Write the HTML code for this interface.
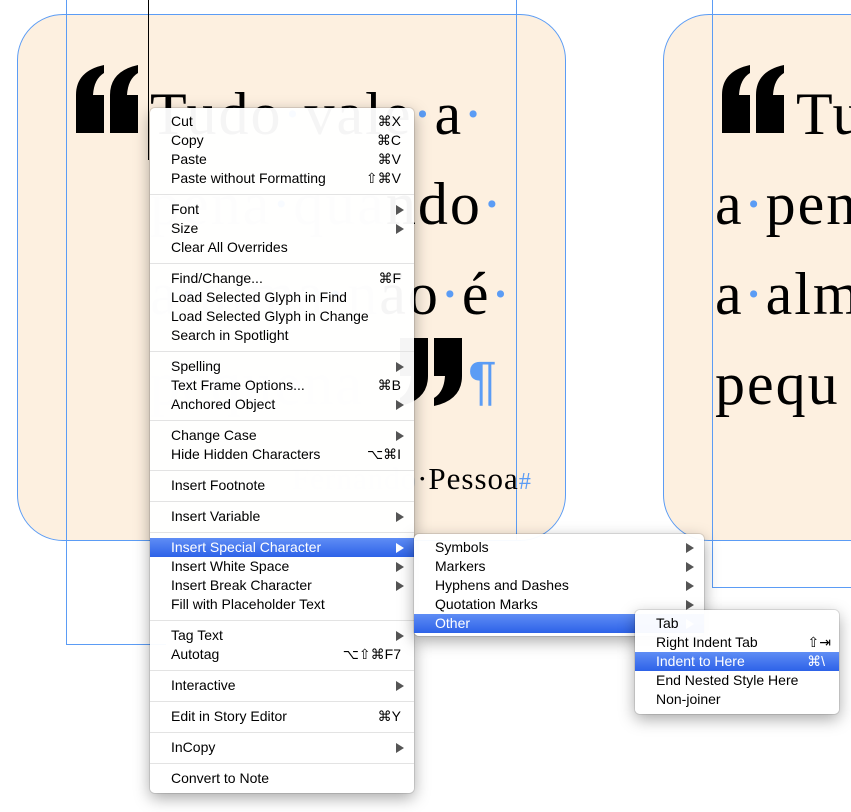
<!DOCTYPE html>
<html><head><meta charset="utf-8"><style>
*{margin:0;padding:0;box-sizing:border-box}
body{width:851px;height:812px;background:#fff;position:relative;overflow:hidden;font-family:"Liberation Sans",sans-serif}
.card{position:absolute;background:#fdf0e0;border:1px solid #5b9cf5;border-radius:46px}
.vl{position:absolute;width:1px;background:#5b9cf5}
.hl{position:absolute;height:1px;background:#5b9cf5}
.t{position:absolute;font-family:"Liberation Serif",serif;font-size:60px;color:#000;white-space:nowrap;line-height:1;letter-spacing:2px}
.dot{color:#5b9cf5}
.menu{position:absolute;background:rgba(255,255,255,0.96);border-radius:5px;box-shadow:0 5px 16px rgba(0,0,0,0.35),0 0 0 1px rgba(0,0,0,0.1)}
.r{position:absolute;left:0;right:0;height:19px;font-size:14px;line-height:19px;color:#000;padding-left:21px;white-space:nowrap}
.r .k{position:absolute;right:13px;top:0}
.r .a{position:absolute;right:10px;top:5px;width:0;height:0;border-left:8px solid #555;border-top:5px solid transparent;border-bottom:5px solid transparent}
.r.h{background:linear-gradient(#5f8df5,#2d62e8);color:#fff}
.r.h .a{border-left-color:#fff}
.s{position:absolute;left:0;right:0;height:1px;background:#e3e3e3}
svg{position:absolute}
</style></head><body>
<div class="card" style="left:17px;top:14px;width:549px;height:527px"></div>
<div class="card" style="left:663px;top:14px;width:240px;height:527px"></div>
<div class="vl" style="left:66px;top:0;height:645px"></div>
<div class="hl" style="left:66px;top:644px;width:100px"></div>
<div class="vl" style="left:516px;top:0;height:541px"></div>
<div class="vl" style="left:712px;top:0;height:588px"></div>
<div class="hl" style="left:712px;top:587px;width:139px"></div>
<div class="vl" style="left:148px;top:0;height:160px;background:#000"></div>

<svg style="left:76px;top:65px" width="64" height="68" viewBox="0 0 64 68"><path d="M0 68V30Q0 6 28 0V8Q18 14 17 30H28V68Z M34 68V30Q34 6 62 0V8Q52 14 51 30H62V68Z" fill="#000"/></svg>
<svg style="left:722px;top:65px" width="64" height="68" viewBox="0 0 64 68"><path d="M0 68V30Q0 6 28 0V8Q18 14 17 30H28V68Z M34 68V30Q34 6 62 0V8Q52 14 51 30H62V68Z" fill="#000"/></svg>

<div class="t" style="left:150px;top:84px">Tudo<span class="dot">·</span>vale<span class="dot">·</span>a<span class="dot">·</span></div>
<div class="t" style="left:150px;top:174px;color:#ccc">pena<span class="dot">·</span>qua<span style="color:#000">ndo</span><span class="dot">·</span></div>
<div class="t" style="left:150px;top:264px;color:#ccc">a<span class="dot">·</span>alma<span class="dot">·</span>n<span style="color:#000">ão</span><span class="dot">·</span><span style="color:#000">é</span><span class="dot">·</span></div>
<div class="t" style="left:150px;top:354px;color:#ddd">pequena</div>
<svg style="left:398px;top:338px" width="64" height="68" viewBox="0 0 64 68"><g transform="rotate(180 32 34)"><path d="M0 68V30Q0 6 28 0V8Q18 14 17 30H28V68Z M34 68V30Q34 6 62 0V8Q52 14 51 30H62V68Z" fill="#000"/></g></svg>
<div class="t" style="left:468px;top:354px;font-size:54px;color:#5b9cf5;font-family:'Liberation Sans',sans-serif">¶</div>
<div class="t" style="left:292px;top:463px;font-size:31px;color:#ddd;letter-spacing:1px">Fernando<span style="color:#000">·Pessoa</span><span class="dot" style="font-size:24px">#</span></div>

<div class="t" style="left:796px;top:84px">Tu</div>
<div class="t" style="left:715px;top:174px">a<span class="dot">·</span>pen</div>
<div class="t" style="left:715px;top:264px">a<span class="dot">·</span>alm</div>
<div class="t" style="left:715px;top:354px">pequ</div>

<div class="menu" style="left:150px;top:108px;width:264px;height:685px">
<div class="r" style="top:4px">Cut<span class="k">⌘X</span></div>
<div class="r" style="top:23px">Copy<span class="k">⌘C</span></div>
<div class="r" style="top:42px">Paste<span class="k">⌘V</span></div>
<div class="r" style="top:61px">Paste without Formatting<span class="k">⇧⌘V</span></div>
<div class="s" style="top:86px"></div>
<div class="r" style="top:92px">Font<span class="a"></span></div>
<div class="r" style="top:111px">Size<span class="a"></span></div>
<div class="r" style="top:130px">Clear All Overrides</div>
<div class="s" style="top:155px"></div>
<div class="r" style="top:161px">Find/Change...<span class="k">⌘F</span></div>
<div class="r" style="top:180px">Load Selected Glyph in Find</div>
<div class="r" style="top:199px">Load Selected Glyph in Change</div>
<div class="r" style="top:218px">Search in Spotlight</div>
<div class="s" style="top:243px"></div>
<div class="r" style="top:249px">Spelling<span class="a"></span></div>
<div class="r" style="top:268px">Text Frame Options...<span class="k">⌘B</span></div>
<div class="r" style="top:287px">Anchored Object<span class="a"></span></div>
<div class="s" style="top:312px"></div>
<div class="r" style="top:318px">Change Case<span class="a"></span></div>
<div class="r" style="top:337px">Hide Hidden Characters<span class="k">⌥⌘I</span></div>
<div class="s" style="top:362px"></div>
<div class="r" style="top:368px">Insert Footnote</div>
<div class="s" style="top:393px"></div>
<div class="r" style="top:399px">Insert Variable<span class="a"></span></div>
<div class="s" style="top:424px"></div>
<div class="r h" style="top:430px">Insert Special Character<span class="a"></span></div>
<div class="r" style="top:449px">Insert White Space<span class="a"></span></div>
<div class="r" style="top:468px">Insert Break Character<span class="a"></span></div>
<div class="r" style="top:487px">Fill with Placeholder Text</div>
<div class="s" style="top:512px"></div>
<div class="r" style="top:518px">Tag Text<span class="a"></span></div>
<div class="r" style="top:537px">Autotag<span class="k">⌥⇧⌘F7</span></div>
<div class="s" style="top:562px"></div>
<div class="r" style="top:568px">Interactive<span class="a"></span></div>
<div class="s" style="top:593px"></div>
<div class="r" style="top:599px">Edit in Story Editor<span class="k">⌘Y</span></div>
<div class="s" style="top:624px"></div>
<div class="r" style="top:630px">InCopy<span class="a"></span></div>
<div class="s" style="top:655px"></div>
<div class="r" style="top:661px">Convert to Note</div>
</div>

<div class="menu" style="left:414px;top:534px;width:290px;height:102px">
<div class="r" style="top:4px">Symbols<span class="a"></span></div>
<div class="r" style="top:23px">Markers<span class="a"></span></div>
<div class="r" style="top:42px">Hyphens and Dashes<span class="a"></span></div>
<div class="r" style="top:61px">Quotation Marks<span class="a"></span></div>
<div class="r h" style="top:80px">Other<span class="a"></span></div>
</div>

<div class="menu" style="left:635px;top:610px;width:204px;height:104px">
<div class="r" style="top:4px">Tab</div>
<div class="r" style="top:23px">Right Indent Tab<span class="k" style="right:8px">⇧⇥</span></div>
<div class="r h" style="top:42px">Indent to Here<span class="k" style="right:14px">⌘\</span></div>
<div class="r" style="top:61px">End Nested Style Here</div>
<div class="r" style="top:80px">Non-joiner</div>
</div>
</body></html>
